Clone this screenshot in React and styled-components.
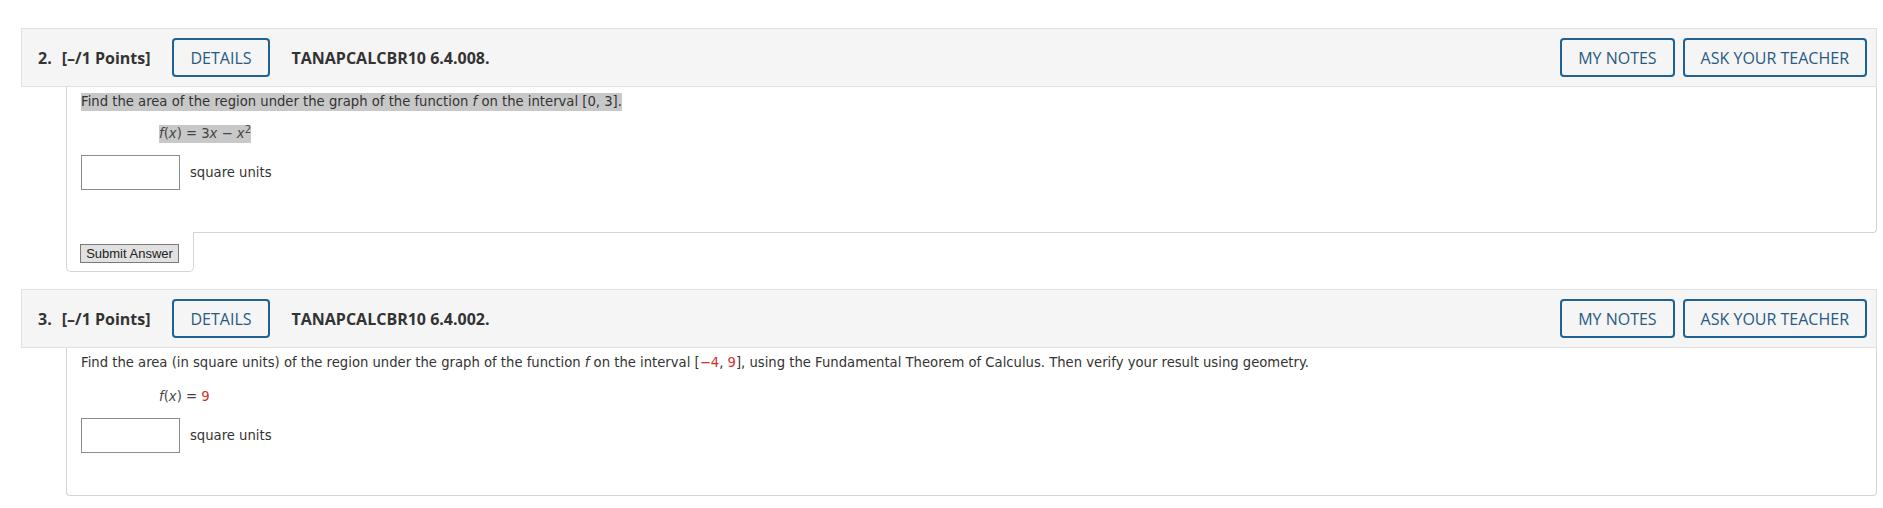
import React from 'react';
import styled, { createGlobalStyle } from 'styled-components';

const GlobalStyle = createGlobalStyle`
  body {
    margin: 0;
    background: #fff;
  }
  * {
    box-sizing: border-box;
  }
`;

const Page = styled.div`
  padding: 28px 6px 0 21px;
`;

const Question = styled.section`
  margin-bottom: 17px;
`;

const Header = styled.div`
  display: flex;
  align-items: center;
  gap: 22px;
  height: 59px;
  padding: 0 9px 0 16px;
  background: #f5f5f5;
  border: 1px solid #e1e1e1;
  font-family: 'Open Sans', 'Liberation Sans', sans-serif;
  font-size: 16px;
  color: #333;
`;

const Title = styled.div`
  font-weight: 700;
  white-space: nowrap;

  .points {
    margin-left: 10px;
  }
`;

const Actions = styled.div`
  display: flex;
  gap: 8px;
  margin-left: auto;
`;

const OutlineButton = styled.button`
  height: 39px;
  padding: 0 16px;
  background: transparent;
  border: 2px solid #1d6195;
  border-radius: 4px;
  font-family: 'Open Sans', 'Liberation Sans', sans-serif;
  font-size: 16px;
  font-weight: 500;
  color: #285a84;
  cursor: pointer;
  white-space: nowrap;
`;

const Body = styled.div`
  margin-left: 45px;
  padding: 6px 14px 42px;
  border: 1px solid #d4d4d4;
  border-top: none;
  border-radius: ${({ $tabbed }) => ($tabbed ? '0 0 4px 0' : '0 0 4px 4px')};
  font-family: 'DejaVu Sans', Verdana, sans-serif;
  font-size: 13.2px;
  line-height: 18px;
  color: #333;
`;

const Prompt = styled.p`
  margin: 0;

  span {
    display: inline-block;
    background: ${({ $selected }) => ($selected ? '#c8c8c8' : 'transparent')};
  }
`;

const Formula = styled.div`
  margin: ${({ $selected }) => ($selected ? '14px' : '16px')} 0 12px 78px;
  color: #444;

  span {
    display: inline-block;
    background: ${({ $selected }) => ($selected ? '#c8c8c8' : 'transparent')};
  }
  sup {
    font-size: 10px;
    line-height: 0;
  }
`;

const Value = styled.span`
  color: #d0312d;
`;

const AnswerRow = styled.div`
  display: flex;
  align-items: center;
  gap: 10px;
`;

const AnswerInput = styled.input`
  width: 99px;
  height: 35px;
  margin: 0;
  border: 1px solid #8c8c8c;
  background: #fff;
`;

const SubmitTab = styled.div`
  width: 128px;
  margin: -1px 0 0 45px;
  padding: 12px 0 8px 13px;
  background: #fff;
  border: 1px solid #d4d4d4;
  border-top: none;
  border-radius: 0 0 5px 5px;
`;

const SubmitButton = styled.button`
  display: block;
  width: 99px;
  height: 19px;
  padding: 0;
  background: #e1e1e1;
  border: 1px solid #7a7a7a;
  font-family: 'Liberation Sans', Arial, sans-serif;
  font-size: 13px;
  color: #222;
`;

const QuestionHeader = ({ number, code }) => (
  <Header>
    <Title>
      {number}.<span className="points">[–/1 Points]</span>
    </Title>
    <OutlineButton>DETAILS</OutlineButton>
    <Title>{code}</Title>
    <Actions>
      <OutlineButton>MY NOTES</OutlineButton>
      <OutlineButton>ASK YOUR TEACHER</OutlineButton>
    </Actions>
  </Header>
);

const Answer = () => (
  <AnswerRow>
    <AnswerInput type="text" />
    <span>square units</span>
  </AnswerRow>
);

export default function App() {
  return (
    <Page>
      <GlobalStyle />
      <Question>
        <QuestionHeader number={2} code="TANAPCALCBR10 6.4.008." />
        <Body $tabbed>
          <Prompt $selected>
            <span>
              Find the area of the region under the graph of the function <i>f</i> on the interval [0, 3].
            </span>
          </Prompt>
          <Formula $selected>
            <span>
              <i>f</i>(<i>x</i>) = 3<i>x</i> − <i>x</i>
              <sup>2</sup>
            </span>
          </Formula>
          <Answer />
        </Body>
        <SubmitTab>
          <SubmitButton>Submit Answer</SubmitButton>
        </SubmitTab>
      </Question>
      <Question>
        <QuestionHeader number={3} code="TANAPCALCBR10 6.4.002." />
        <Body>
          <Prompt>
            <span>
              Find the area (in square units) of the region under the graph of the function <i>f</i> on the
              interval [<Value>−4</Value>, <Value>9</Value>], using the Fundamental Theorem of Calculus. Then
              verify your result using geometry.
            </span>
          </Prompt>
          <Formula>
            <span>
              <i>f</i>(<i>x</i>) = <Value>9</Value>
            </span>
          </Formula>
          <Answer />
        </Body>
      </Question>
    </Page>
  );
}
